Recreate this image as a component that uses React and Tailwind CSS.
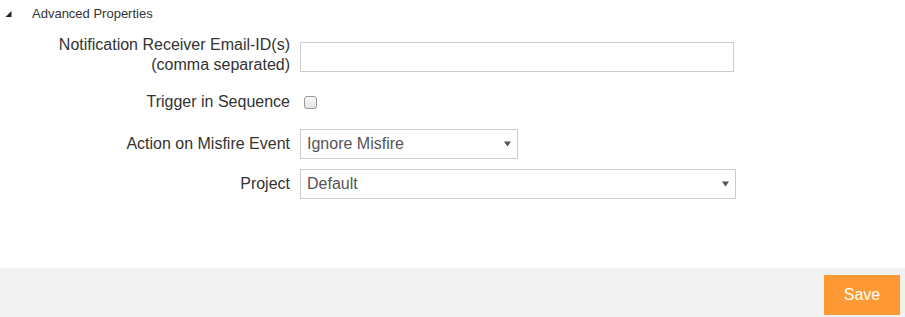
import React from 'react';

const font = { fontFamily: '"Liberation Sans", Arial, sans-serif' };

function Caret() {
  return (
    <svg width="7" height="6" viewBox="0 0 7 6" className="shrink-0">
      <polygon points="0,0.5 7,0.5 3.5,5.5" fill="#555" />
    </svg>
  );
}

export default function App() {
  return (
    <div className="w-[905px] h-[317px] bg-white flex flex-col text-[#333]" style={font}>
      {/* Header */}
      <div className="h-[28px] flex items-center">
        <svg width="14" height="12" viewBox="0 0 14 12">
          <polygon points="11.5,3 11.5,9 5.5,9" fill="#222" />
        </svg>
        <span className="ml-[18px] text-[13px] leading-[28px]">Advanced Properties</span>
      </div>

      {/* Form */}
      <div className="flex-1 flex flex-col">
        <div className="flex items-start mt-[7px]">
          <label className="w-[300px] pr-[10px] text-right text-[16px] leading-[20px]">
            Notification Receiver Email-ID(s)
            <br />
            (comma separated)
          </label>
          <input className="mt-[7px] w-[434px] h-[30px] border border-[#ccc] outline-none px-[6px]" />
        </div>

        <div className="flex items-center h-[28px] mt-[13px]">
          <label className="w-[300px] pr-[10px] text-right text-[16px] leading-[20px]">Trigger in Sequence</label>
          <span className="ml-[4px] w-[13px] h-[13px] rounded-[3px] border border-[#999] bg-gradient-to-b from-[#fafafa] to-[#e4e4e4]" />
        </div>

        <div className="flex items-center mt-[13px]">
          <label className="w-[300px] pr-[10px] text-right text-[16px] leading-[20px]">Action on Misfire Event</label>
          <div className="w-[218px] h-[30px] border border-[#ccc] flex items-center justify-between pl-[6px] pr-[6px] text-[16px] text-[#555]">
            <span>Ignore Misfire</span>
            <Caret />
          </div>
        </div>

        <div className="flex items-center mt-[10px]">
          <label className="w-[300px] pr-[10px] text-right text-[16px] leading-[20px]">Project</label>
          <div className="w-[436px] h-[30px] border border-[#ccc] flex items-center justify-between pl-[6px] pr-[6px] text-[16px] text-[#555]">
            <span>Default</span>
            <Caret />
          </div>
        </div>
      </div>

      {/* Footer */}
      <div className="h-[49px] bg-[#f2f2f2] flex justify-end items-start pt-[7px] pr-[5px]">
        <button className="w-[76px] h-[40px] bg-[#ff9933] text-white text-[16px]">Save</button>
      </div>
    </div>
  );
}
